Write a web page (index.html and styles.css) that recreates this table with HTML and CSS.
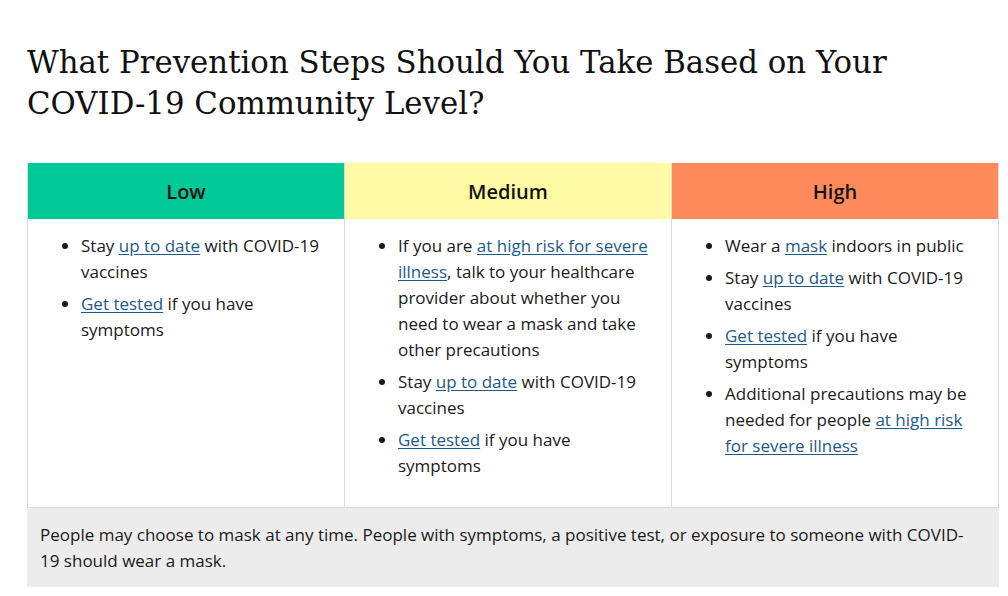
FILE: index.html
```html
<!DOCTYPE html>
<html lang="en">
<head>
<meta charset="utf-8">
<title>COVID-19 Community Level</title>
<link rel="stylesheet" href="styles.css">
</head>
<body>
<main class="page">
  <h1 class="title">What Prevention Steps Should You Take Based on Your COVID-19 Community Level?</h1>
  <div class="levels">
    <div class="col col-low">
      <div class="head head-low">Low</div>
      <ul class="steps">
        <li>Stay <a href="#">up to date</a> with COVID-19 vaccines</li>
        <li><a href="#">Get tested</a> if you have symptoms</li>
      </ul>
    </div>
    <div class="col col-med">
      <div class="head head-med">Medium</div>
      <ul class="steps">
        <li>If you are <a href="#">at high risk for severe illness</a>, talk to your healthcare provider about whether you need to wear a mask and take other precautions</li>
        <li>Stay <a href="#">up to date</a> with COVID-19 vaccines</li>
        <li><a href="#">Get tested</a> if you have symptoms</li>
      </ul>
    </div>
    <div class="col col-high">
      <div class="head head-high">High</div>
      <ul class="steps">
        <li>Wear a <a href="#">mask</a> indoors in public</li>
        <li>Stay <a href="#">up to date</a> with COVID-19 vaccines</li>
        <li><a href="#">Get tested</a> if you have symptoms</li>
        <li>Additional precautions may be needed for people <a href="#">at high risk for severe illness</a></li>
      </ul>
    </div>
    <div class="note">People may choose to mask at any time. People with symptoms, a positive test, or exposure to someone with COVID-19 should wear a mask.</div>
  </div>
</main>
</body>
</html>
```
FILE: styles.css
```css
html, body {
  margin: 0;
  padding: 0;
  background: #ffffff;
}
.page {
  padding: 42px 9px 0 27px;
  font-family: "Open Sans", "Liberation Sans", sans-serif;
  color: #1a1a1a;
}
.title {
  margin: 0 0 39px 0;
  font-family: "DejaVu Serif", "Liberation Serif", serif;
  font-weight: 400;
  font-size: 30.8px;
  line-height: 41px;
  color: #111;
  width: 900px;
}
.levels {
  display: grid;
  grid-template-columns: 317px 327px 328px;
  width: 972px;
}
.col {
  display: flex;
  flex-direction: column;
  border-left: 1px solid #dcdcdc;
  background: #fff;
}
.col-high {
  border-right: 1px solid #dcdcdc;
}
.head {
  height: 56px;
  display: flex;
  align-items: center;
  justify-content: center;
  font-size: 20px;
  font-weight: 600;
  color: #111;
}
.head-low { background: #00c998; }
.head-med { background: #fffba4; }
.head-high { background: #ff8a5c; }
.steps {
  margin: 0;
  padding: 14px 14px 22px 53px;
  font-size: 17px;
  line-height: 26px;
}
.steps li {
  margin-bottom: 6px;
}
.steps a {
  color: #1d5a8a;
  text-decoration: underline;
  text-underline-offset: 2px;
}
.note {
  grid-column: 1 / -1;
  background: #ececec;
  border-top: 1px solid #dcdcdc;
  padding: 14px 24px 13px 13px;
  font-size: 17px;
  line-height: 26px;
  color: #1a1a1a;
}
```
